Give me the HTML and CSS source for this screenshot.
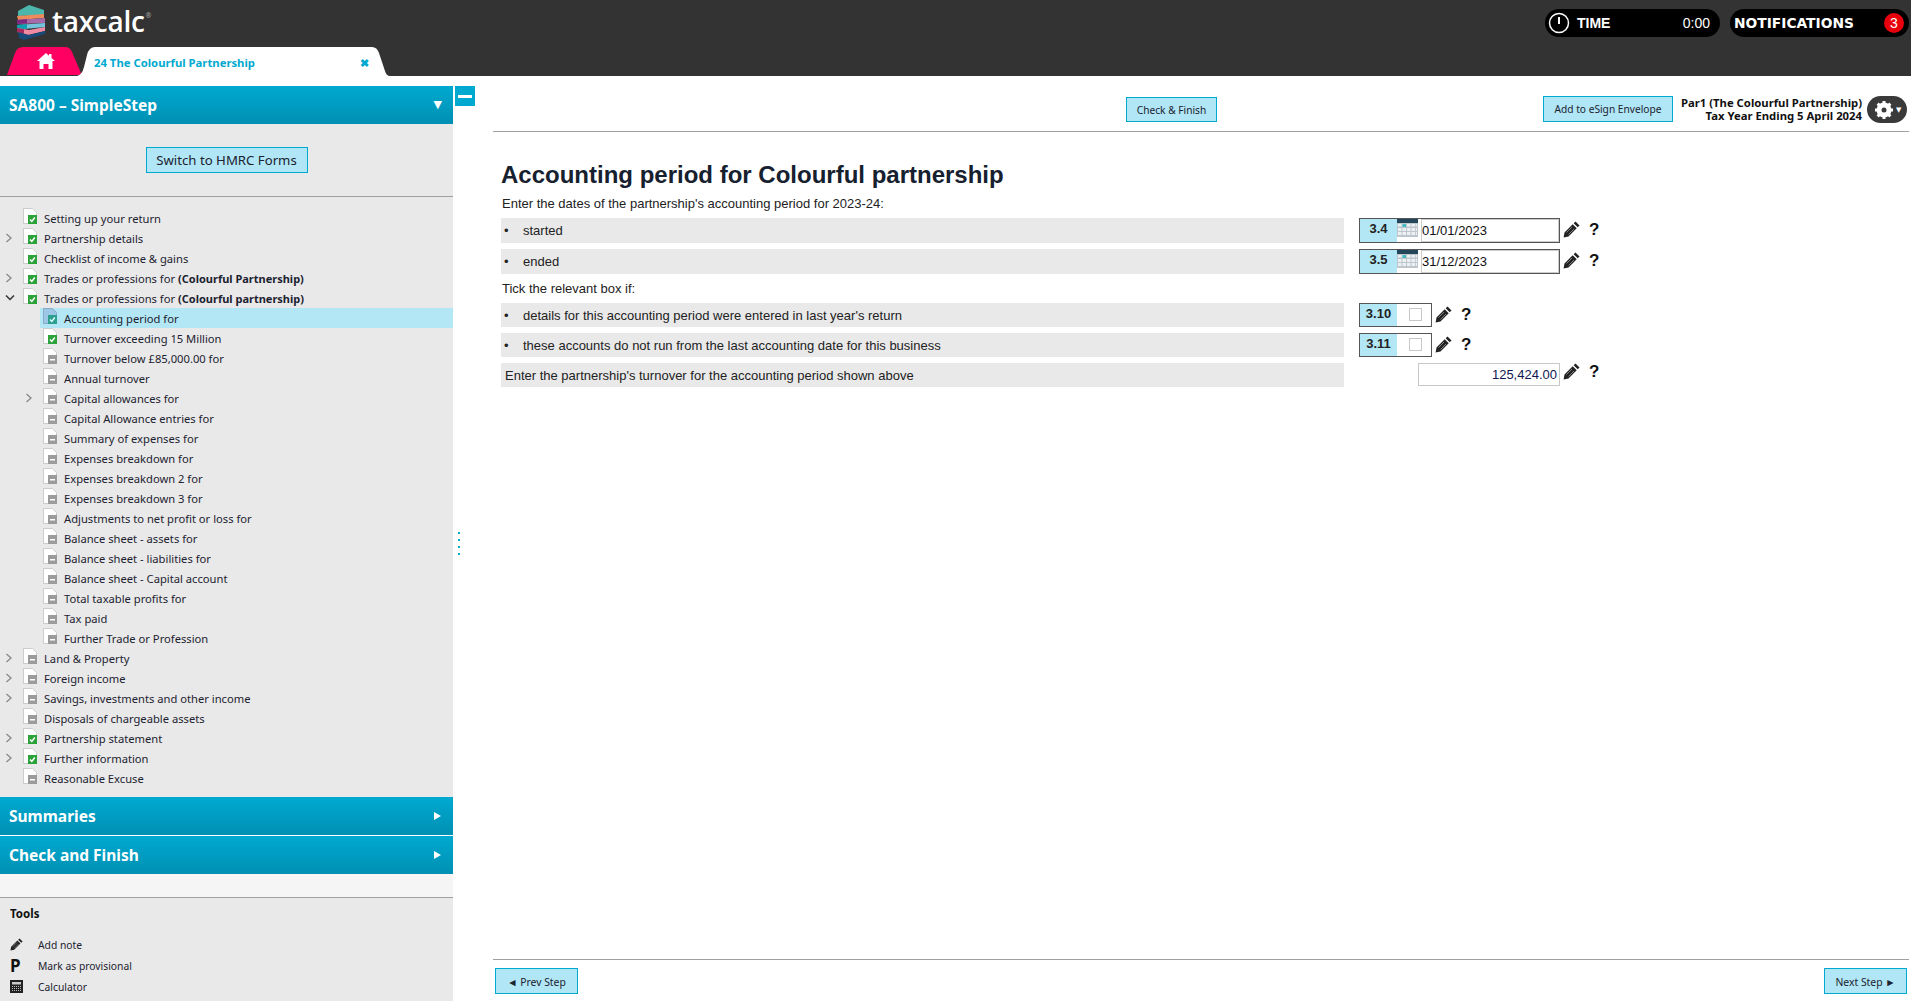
FILE: index.html
```html
<!DOCTYPE html>
<html lang="en">
<head>
    <meta charset="UTF-8">
    <title>TaxCalc - Accounting period</title>
    <link rel="stylesheet" href="styles.css">
</head>
<body>
    <svg class="defs" width="0" height="0">
        <defs>
            <symbol id="doc-ok" viewBox="0 0 14 16">
                <path d="M.5.500h9l4 4v11H.5z" fill="#fff" stroke="#ccc"/>
                <rect x="5" y="7" width="9" height="9" fill="#2ba33a"/>
                <path d="M7 11.500l1.800 2 3-4" fill="none" stroke="#fff" stroke-width="1.400"/>
            </symbol>
            <symbol id="doc-no" viewBox="0 0 14 16">
                <path d="M.5.500h9l4 4v11H.5z" fill="#fff" stroke="#ccc"/>
                <rect x="5" y="7" width="9" height="9" fill="#9b9b9b"/>
                <rect x="7" y="11" width="5" height="1.500" fill="#fff"/>
            </symbol>
            <symbol id="doc-sel" viewBox="0 0 14 16">
                <path d="M.5.500h9l4 4v11H.5z" fill="#9cc7e6" stroke="#8aa9c8"/>
                <rect x="5" y="7" width="9" height="9" fill="#2e9f8e"/>
                <path d="M7 11.500l1.800 2 3-4" fill="none" stroke="#dff" stroke-width="1.400"/>
            </symbol>
            <symbol id="pencil" viewBox="0 0 17 17">
                <path d="M12.500.5l4 4-1.800 1.800-4-4zM9.700 3.300l4 4-8.200 8.200L.6 16.400l.9-4.900z" fill="#222"/>
                <path d="M9 6l-5.500 5.500M11 8l-5.500 5.500" stroke="#999" stroke-width=".8"/>
            </symbol>
            <symbol id="chev-r" viewBox="0 0 8 10">
                <path d="M1.500 1l4.500 4-4.500 4" fill="none" stroke="#888" stroke-width="1.300"/>
            </symbol>
            <symbol id="chev-d" viewBox="0 0 10 8">
                <path d="M1 1.500l4 4 4-4" fill="none" stroke="#333" stroke-width="1.500"/>
            </symbol>
            <symbol id="calendar" viewBox="0 0 21 18">
                <rect width="21" height="18" fill="#bcc6cc"/>
                <rect width="21" height="4" fill="#24465a"/>
                <path d="M1 5h3.500v2.500H1zM5.500 5H9v2.500H5.500zM10 5h3.500v2.500H10zM14.500 5H18v2.500h-3.500zM1 9h3.500v3H1zM5.500 9H9v3H5.500zM10 9h3.500v3H10zM14.500 9H18v3h-3.500zM18.800 5H20v2.500h-1.200zM18.800 9H20v3h-1.200zM1 13h3.500v3H1zM5.500 13H9v3H5.500zM10 13h3.500v3H10zM14.500 13H18v3h-3.500zM18.800 13H20v3h-1.200z" fill="#eef1f3"/>
                <rect x="5.500" y="5" width="3.500" height="3" fill="#45bcc4"/>
            </symbol>
        </defs>
    </svg>

    <header class="topbar">
        <div class="topbar-row">
            <div class="logo">
                <svg class="logo-mark" viewBox="0 0 30 35" width="30" height="35">
                    <path d="M13 0l15 5v5L2 11V6z" fill="#4db6ac"/>
                    <path d="M1 11l27-2v4L2 15z" fill="#ef8a5a"/>
                    <path d="M1 15l28-2v5L1 19z" fill="#a76aa8"/>
                    <path d="M1 15l10-.7v4L1 19z" fill="#7b2a7f"/>
                    <path d="M1 20l28-2v4L8 24l-7-1z" fill="#72c5dc"/>
                    <path d="M1 20l10-.7v4.500l-3 .2-7-1z" fill="#0e9fb3"/>
                    <path d="M1 23l12 2 16-3v4L12 30 1 27z" fill="#ee8aa4"/>
                    <path d="M1 23l7 1.200v4.500L1 27z" fill="#a52a5e"/>
                    <path d="M2 27l11 3 16-4v3L8 35l-5-2z" fill="#164a78"/>
                </svg>
                <span class="logo-text">taxcalc</span><span class="logo-reg">®</span>
            </div>
            <div class="pills">
                <div class="pill pill-time">
                    <svg viewBox="0 0 22 22" width="22" height="22">
                        <circle cx="11" cy="11" r="9.500" fill="none" stroke="#fff" stroke-width="1.500"/>
                        <path d="M11 5v7" stroke="#fff" stroke-width="2"/>
                    </svg>
                    <strong>TIME</strong>
                    <span class="pill-clock">0:00</span>
                </div>
                <div class="pill pill-notify">
                    <strong>NOTIFICATIONS</strong>
                    <span class="badge">3</span>
                </div>
            </div>
        </div>
        <div class="tabs">
            <div class="tab-home">
                <svg viewBox="0 0 18 16" width="18" height="16">
                    <path d="M9 0l3 2.700V1h2.500v3.900L18 8h-2.500v8h-4v-5h-5v5h-4V8H0z" fill="#fff"/>
                </svg>
            </div>
            <div class="tab-doc">
                <span>24 The Colourful Partnership</span>
                <span class="tab-close">✖</span>
            </div>
        </div>
    </header>

    <div class="layout">
        <aside class="sidebar">
            <div class="panel-head">SA800 – SimpleStep <span class="arrow">▼</span></div>
            <div class="panel-body">
                <div class="switch-wrap">
                    <button class="btn btn-switch">Switch to HMRC Forms</button>
                </div>
                <ul class="tree">
                    <li class="row"><span class="chev"></span><svg class="doc"><use href="#doc-ok"/></svg>Setting up your return</li>
                    <li class="row"><span class="chev"><svg class="chev-r"><use href="#chev-r"/></svg></span><svg class="doc"><use href="#doc-ok"/></svg>Partnership details</li>
                    <li class="row"><span class="chev"></span><svg class="doc"><use href="#doc-ok"/></svg>Checklist of income &amp; gains</li>
                    <li class="row"><span class="chev"><svg class="chev-r"><use href="#chev-r"/></svg></span><svg class="doc"><use href="#doc-ok"/></svg><span>Trades or professions for <b>(Colourful Partnership)</b></span></li>
                    <li class="row"><span class="chev"><svg class="chev-d"><use href="#chev-d"/></svg></span><svg class="doc"><use href="#doc-ok"/></svg><span>Trades or professions for <b>(Colourful partnership)</b></span></li>
                    <li class="row sub active"><span class="chev"></span><svg class="doc"><use href="#doc-sel"/></svg>Accounting period for</li>
                    <li class="row sub"><span class="chev"></span><svg class="doc"><use href="#doc-ok"/></svg>Turnover exceeding 15 Million</li>
                    <li class="row sub"><span class="chev"></span><svg class="doc"><use href="#doc-no"/></svg>Turnover below £85,000.00 for</li>
                    <li class="row sub"><span class="chev"></span><svg class="doc"><use href="#doc-no"/></svg>Annual turnover</li>
                    <li class="row sub"><span class="chev"><svg class="chev-r"><use href="#chev-r"/></svg></span><svg class="doc"><use href="#doc-no"/></svg>Capital allowances for</li>
                    <li class="row sub"><span class="chev"></span><svg class="doc"><use href="#doc-no"/></svg>Capital Allowance entries for</li>
                    <li class="row sub"><span class="chev"></span><svg class="doc"><use href="#doc-no"/></svg>Summary of expenses for</li>
                    <li class="row sub"><span class="chev"></span><svg class="doc"><use href="#doc-no"/></svg>Expenses breakdown for</li>
                    <li class="row sub"><span class="chev"></span><svg class="doc"><use href="#doc-no"/></svg>Expenses breakdown 2 for</li>
                    <li class="row sub"><span class="chev"></span><svg class="doc"><use href="#doc-no"/></svg>Expenses breakdown 3 for</li>
                    <li class="row sub"><span class="chev"></span><svg class="doc"><use href="#doc-no"/></svg>Adjustments to net profit or loss for</li>
                    <li class="row sub"><span class="chev"></span><svg class="doc"><use href="#doc-no"/></svg>Balance sheet - assets for</li>
                    <li class="row sub"><span class="chev"></span><svg class="doc"><use href="#doc-no"/></svg>Balance sheet - liabilities for</li>
                    <li class="row sub"><span class="chev"></span><svg class="doc"><use href="#doc-no"/></svg>Balance sheet - Capital account</li>
                    <li class="row sub"><span class="chev"></span><svg class="doc"><use href="#doc-no"/></svg>Total taxable profits for</li>
                    <li class="row sub"><span class="chev"></span><svg class="doc"><use href="#doc-no"/></svg>Tax paid</li>
                    <li class="row sub"><span class="chev"></span><svg class="doc"><use href="#doc-no"/></svg>Further Trade or Profession</li>
                    <li class="row"><span class="chev"><svg class="chev-r"><use href="#chev-r"/></svg></span><svg class="doc"><use href="#doc-no"/></svg>Land &amp; Property</li>
                    <li class="row"><span class="chev"><svg class="chev-r"><use href="#chev-r"/></svg></span><svg class="doc"><use href="#doc-no"/></svg>Foreign income</li>
                    <li class="row"><span class="chev"><svg class="chev-r"><use href="#chev-r"/></svg></span><svg class="doc"><use href="#doc-no"/></svg>Savings, investments and other income</li>
                    <li class="row"><span class="chev"></span><svg class="doc"><use href="#doc-no"/></svg>Disposals of chargeable assets</li>
                    <li class="row"><span class="chev"><svg class="chev-r"><use href="#chev-r"/></svg></span><svg class="doc"><use href="#doc-ok"/></svg>Partnership statement</li>
                    <li class="row"><span class="chev"><svg class="chev-r"><use href="#chev-r"/></svg></span><svg class="doc"><use href="#doc-ok"/></svg>Further information</li>
                    <li class="row"><span class="chev"></span><svg class="doc"><use href="#doc-no"/></svg>Reasonable Excuse</li>
                </ul>
            </div>
            <div class="panel-head">Summaries <span class="arrow-r"></span></div>
            <div class="panel-head panel-last">Check and Finish <span class="arrow-r"></span></div>
            <div class="side-gap"></div>
            <div class="tools">
                <h4>Tools</h4>
                <div class="tool"><svg class="tool-icon"><use href="#pencil"/></svg>Add note</div>
                <div class="tool"><span class="tool-icon tool-p">P</span>Mark as provisional</div>
                <div class="tool">
                    <svg class="tool-icon" viewBox="0 0 13 13">
                        <rect width="13" height="13" fill="#222"/>
                        <rect x="2" y="2" width="9" height="2.500" fill="#ccc"/>
                        <path d="M2 6.500h9M2 8.500h9M2 10.500h9" stroke="#bbb" stroke-dasharray="1 1"/>
                    </svg>Calculator
                </div>
            </div>
        </aside>

        <div class="splitter">
            <div class="collapse"><span></span></div>
            <div class="dots"><i></i><i></i><i></i><i></i></div>
        </div>

        <main class="main">
            <div class="main-top">
                <button class="btn btn-check">Check &amp; Finish</button>
                <button class="btn btn-esign">Add to eSign Envelope</button>
                <div class="return-info">
                    <div>Par1 (The Colourful Partnership)</div>
                    <div>Tax Year Ending 5 April 2024</div>
                </div>
                <div class="gear">
                    <svg viewBox="0 0 20 20" width="20" height="20">
                        <circle cx="10" cy="10" r="5.500" fill="none" stroke="#fff" stroke-width="4"/>
                        <path d="M10 1v18M1 10h18M3.600 3.600l12.800 12.800M16.400 3.600L3.600 16.400" stroke="#fff" stroke-width="3"/>
                        <circle cx="10" cy="10" r="2.500" fill="#3a3a3a"/>
                    </svg>
                    <span class="gear-arrow">▼</span>
                </div>
            </div>

            <div class="content">
                <h1>Accounting period for Colourful partnership</h1>
                <p class="intro">Enter the dates of the partnership's accounting period for 2023-24:</p>

                <div class="form-row date-row">
                    <div class="form-label"><span class="dot">•</span>started</div>
                    <div class="box box-date">
                        <span class="box-no">3.4</span>
                        <svg class="cal"><use href="#calendar"/></svg>
                        <span class="box-input">01/01/2023</span>
                    </div>
                    <svg class="edit"><use href="#pencil"/></svg>
                    <span class="help">?</span>
                </div>
                <div class="form-row date-row">
                    <div class="form-label"><span class="dot">•</span>ended</div>
                    <div class="box box-date">
                        <span class="box-no">3.5</span>
                        <svg class="cal"><use href="#calendar"/></svg>
                        <span class="box-input">31/12/2023</span>
                    </div>
                    <svg class="edit"><use href="#pencil"/></svg>
                    <span class="help">?</span>
                </div>

                <p class="tick-intro">Tick the relevant box if:</p>

                <div class="form-row check-row">
                    <div class="form-label"><span class="dot">•</span>details for this accounting period were entered in last year's return</div>
                    <div class="box box-tick">
                        <span class="box-no">3.10</span>
                        <span class="tick"></span>
                    </div>
                    <svg class="edit"><use href="#pencil"/></svg>
                    <span class="help">?</span>
                </div>
                <div class="form-row check-row">
                    <div class="form-label"><span class="dot">•</span>these accounts do not run from the last accounting date for this business</div>
                    <div class="box box-tick">
                        <span class="box-no">3.11</span>
                        <span class="tick"></span>
                    </div>
                    <svg class="edit"><use href="#pencil"/></svg>
                    <span class="help">?</span>
                </div>
                <div class="form-row check-row amount-row">
                    <div class="form-label form-label-plain">Enter the partnership's turnover for the accounting period shown above</div>
                    <div class="amount">125,424.00</div>
                    <svg class="edit"><use href="#pencil"/></svg>
                    <span class="help">?</span>
                </div>
            </div>

            <div class="main-foot">
                <button class="btn btn-step">◄ Prev Step</button>
                <button class="btn btn-step">Next Step ►</button>
            </div>
        </main>
    </div>
</body>
</html>
```

FILE: styles.css
```css
/* General */
* {
    box-sizing: border-box;
}

html, body {
    margin: 0;
    padding: 0;
    height: 100%;
    overflow: hidden;
}

body {
    font-family: "Noto Sans", sans-serif;
    color: #1c2230;
    background: #fff;
    display: flex;
    flex-direction: column;
}

.defs {
    position: absolute;
}

/* Header */
.topbar {
    background: #333;
    height: 76px;
    flex: none;
}

.topbar-row {
    height: 47px;
    display: flex;
    justify-content: space-between;
    padding: 5px 2px 0 16px;
}

.logo {
    display: flex;
    align-items: flex-start;
    color: #fff;
}

.logo-text {
    font-family: "Open Sans", sans-serif;
    font-weight: 600;
    font-size: 28px;
    line-height: 32px;
    letter-spacing: -0.3px;
    margin-left: 6px;
}

.logo-reg {
    font-size: 7px;
    color: #aaa;
    margin: 6px 0 0 1px;
}

.pills {
    display: flex;
    gap: 10px;
    padding-top: 4px;
}

.pill {
    background: #000;
    height: 28px;
    border-radius: 14px;
    display: flex;
    align-items: center;
    color: #fff;
    font-family: "Liberation Sans", sans-serif;
}

.pill-time {
    width: 175px;
    padding: 0 10px 0 3px;
    font-size: 14px;
}

.pill-time strong {
    margin-left: 7px;
}

.pill-clock {
    margin-left: auto;
}

.pill-notify {
    width: 179px;
    padding: 0 5px 0 4px;
    justify-content: space-between;
}

.pill-notify strong {
    font-family: "DejaVu Sans", sans-serif;
    font-size: 13.800px;
}

.badge {
    width: 20px;
    height: 20px;
    border-radius: 50%;
    background: #e8000d;
    font-size: 14px;
    text-align: center;
    line-height: 20px;
}

.tabs {
    display: flex;
    height: 29px;
    padding-left: 7px;
}

.tab-home {
    width: 74px;
    height: 28px;
    background: #ff0062;
    clip-path: path("M0 28L8 6Q10 0 16 0H58Q63 0 65 5L74 26Q73 28 71 28Z");
    display: flex;
    align-items: center;
    justify-content: center;
    padding-left: 4px;
}

.tab-doc {
    width: 312px;
    margin-left: -4px;
    background: #fff;
    clip-path: path("M0 29Q5 28 7 20L10 8Q12 0 18 0H295Q300 0 302 6L308 24Q309 28 312 29Z");
    color: #00a9d0;
    font-size: 11.300px;
    font-weight: 700;
    display: flex;
    align-items: center;
    justify-content: space-between;
    padding: 2px 20px 0 17px;
}

.tab-close {
    font-size: 11px;
}

/* Page layout */
.layout {
    flex: 1;
    min-height: 0;
    display: flex;
    padding-top: 10px;
}

/* Sidebar */
.sidebar {
    width: 453px;
    flex: none;
    display: flex;
    flex-direction: column;
}

.panel-head {
    height: 38px;
    flex: none;
    background: linear-gradient(#00a9d0, #0090b3);
    color: #fff;
    font-size: 15.500px;
    font-weight: 700;
    line-height: 36px;
    padding: 0 9px 1px;
    display: flex;
    justify-content: space-between;
    align-items: center;
    margin-bottom: 1px;
}

.panel-last {
    margin-bottom: 0;
}

.arrow {
    font-family: "DejaVu Sans", sans-serif;
    font-size: 11px;
    font-weight: 400;
    padding-right: 2px;
}

.arrow-r {
    border-left: 7px solid #fff;
    border-top: 4px solid transparent;
    border-bottom: 4px solid transparent;
    margin-right: 3px;
}

.panel-body {
    background: #e9e9e9;
    height: 673px;
    flex: none;
    margin-top: -1px;
}

.switch-wrap {
    height: 73px;
    border-bottom: 1px solid #a0a0a0;
    display: flex;
    justify-content: center;
    padding-top: 23px;
}

.btn {
    font-family: "Noto Sans", sans-serif;
    color: #1c2230;
    background: #b0e6f5;
    border: 1px solid #00a9d0;
    padding: 0;
}

.btn-switch {
    width: 162px;
    height: 26px;
    font-size: 13.200px;
}

.tree {
    list-style: none;
    margin: 0;
    padding: 11px 0 0;
}

.row {
    height: 20px;
    display: flex;
    align-items: center;
    font-size: 11.200px;
    white-space: nowrap;
    padding-left: 5px;
}

.row b {
    font-size: 11px;
    font-weight: 700;
}

.chev {
    width: 18px;
    height: 20px;
    flex: none;
    display: flex;
    align-items: center;
}

.chev-r {
    width: 8px;
    height: 10px;
}

.chev-d {
    width: 10px;
    height: 8px;
}

.doc {
    width: 14px;
    height: 16px;
    flex: none;
    margin: 0 7px 4px 0;
}

.sub {
    margin-left: 20px;
}

.active {
    background: #b3e7f5;
    margin-left: 40px;
    padding-left: 3px;
}

.active .chev {
    width: 0;
}

.side-gap {
    height: 23px;
    flex: none;
    background: #f5f5f5;
}

.tools {
    flex: 1;
    background: #e9e9e9;
    border-top: 1px solid #a0a0a0;
    padding: 8px 10px 0;
    font-size: 10.300px;
}

.tools h4 {
    margin: 0 0 12px;
    font-size: 11.500px;
    font-weight: 700;
    line-height: 16px;
    color: #111;
}

.tool {
    height: 21px;
    display: flex;
    align-items: center;
}

.tool-icon {
    width: 13px;
    height: 13px;
    margin-right: 15px;
    flex: none;
}

.tool-p {
    font-size: 17px;
    font-weight: 700;
    line-height: 13px;
    color: #111;
}

/* Splitter */
.splitter {
    width: 40px;
    flex: none;
    padding-left: 2px;
}

.collapse {
    width: 20px;
    height: 20px;
    background: #00a9d0;
    display: flex;
    align-items: center;
    justify-content: center;
}

.collapse span {
    width: 14px;
    height: 3px;
    background: #fff;
}

.dots {
    margin: 426px 0 0 3px;
    display: flex;
    flex-direction: column;
    gap: 5px;
}

.dots i {
    width: 2px;
    height: 2px;
    background: #00a9d0;
}

/* Main area */
.main {
    flex: 1;
    min-width: 0;
    display: flex;
    flex-direction: column;
    padding-right: 2px;
}

.main-top {
    height: 46px;
    flex: none;
    border-bottom: 1px solid #a0a0a0;
    display: flex;
    align-items: flex-start;
    padding-top: 10px;
}

.main-top .btn {
    font-size: 10.200px;
}

.btn-check {
    width: 91px;
    height: 25px;
    margin: 1px 0 0 633px;
}

.btn-esign {
    width: 130px;
    height: 26px;
    margin: 0 8px 0 326px;
}

.return-info {
    width: 182px;
    font-size: 11.300px;
    font-weight: 700;
    line-height: 13px;
    text-align: right;
    color: #111;
    white-space: nowrap;
    margin-left: -1px;
}

.gear {
    width: 40px;
    height: 27px;
    margin-left: 5px;
    background: #3a3a3a;
    border-radius: 14px;
    display: flex;
    align-items: center;
    padding-left: 7px;
    color: #fff;
}

.gear-arrow {
    font-family: "DejaVu Sans", sans-serif;
    font-size: 7px;
    margin-left: 2px;
}

.content {
    flex: 1;
    padding: 28px 0 0 8px;
    font-family: "Liberation Sans", sans-serif;
    font-size: 13px;
    color: #222;
}

.content h1 {
    font-size: 24px;
    line-height: 30px;
    font-weight: 700;
    margin: 0;
    color: #16202e;
}

.intro {
    margin: 6px 0 6px 1px;
    line-height: 16px;
}

.tick-intro {
    margin: 7px 0 6px 1px;
    line-height: 16px;
}

.form-row {
    display: flex;
    align-items: flex-start;
    margin-bottom: 6px;
}

.form-label {
    width: 843px;
    flex: none;
    background: #e9e9e9;
    height: 100%;
    padding-left: 3px;
    display: flex;
    align-items: center;
    margin-right: 15px;
}

.date-row {
    height: 25px;
}

.check-row {
    height: 24px;
}

.dot {
    width: 19px;
    flex: none;
}

.form-label-plain {
    padding-left: 4px;
}

.box {
    display: flex;
    height: 100%;
    border: 1px solid #555;
    background: #fff;
}

.box-date {
    width: 201px;
}

.box-tick {
    width: 73px;
}

.box-no {
    width: 37px;
    flex: none;
    background: #b3e7f5;
    font-weight: 700;
    text-align: center;
    line-height: 20px;
}

.cal {
    width: 21px;
    height: 18px;
    flex: none;
}

.box-input {
    flex: 1;
    margin-left: 3px;
    border: 1px solid #ccc;
    line-height: 21px;
    color: #111;
}

.tick {
    width: 13px;
    height: 13px;
    margin: 4px 0 0 12px;
    border: 1px solid #c8c8c8;
    background: #fff;
}

.amount {
    width: 142px;
    height: 23px;
    margin-left: 59px;
    border: 1px solid #c8c8c8;
    text-align: right;
    line-height: 22px;
    padding-right: 2px;
    color: #101850;
}

.edit {
    width: 17px;
    height: 17px;
    margin: 3px 0 0 3px;
    flex: none;
}

.help {
    font-size: 17px;
    font-weight: 700;
    line-height: 20px;
    color: #111;
    margin: 2px 0 0 9px;
}

.amount-row .edit {
    margin-top: 0;
}

.amount-row .help {
    margin-top: -1px;
}

.main-foot {
    height: 42px;
    flex: none;
    border-top: 1px solid #a0a0a0;
    display: flex;
    justify-content: space-between;
    padding: 8px 2px 0;
}

.btn-step {
    width: 83px;
    height: 26px;
    padding-top: 2px;
    font-size: 10.400px;
}
```
